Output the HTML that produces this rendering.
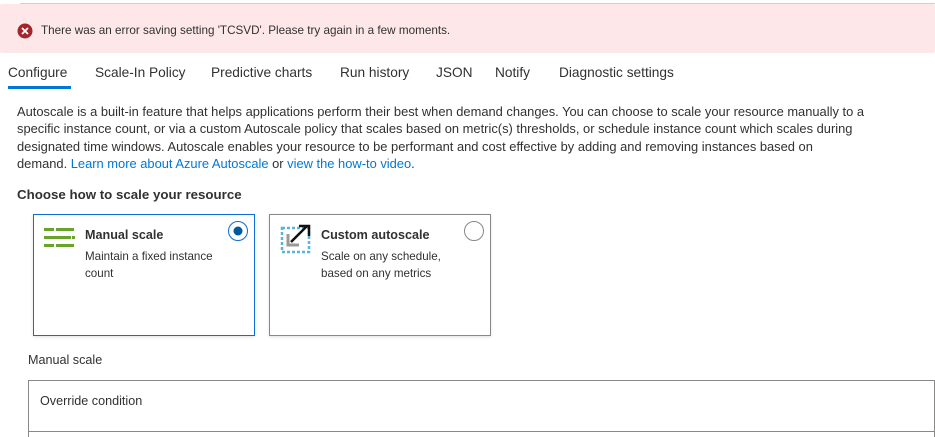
<!DOCTYPE html>
<html><head><meta charset="utf-8"><style>
*{margin:0;padding:0;box-sizing:border-box}
html,body{width:935px;height:437px;overflow:hidden}
body{background:#fff;font-family:"Liberation Sans",sans-serif;color:#323130;position:relative}
.abs{position:absolute}
.err{left:0;top:4px;width:935px;height:49px;background:#fde7e9;border-radius:2px}
.topline{left:20px;top:3px;width:915px;height:1px;background:#d0d0d0}
.tab{top:65px;font-size:13.7px;color:#323130;white-space:nowrap}
p{left:17px;top:103px;width:900px;white-space:nowrap;font-size:12.9px;line-height:17.3px;color:#323130}
a{color:#0078d4;text-decoration:none}
.card{top:214px;width:222px;height:122px;background:#fff;box-shadow:0 1px 3px rgba(0,0,0,.12)}
.t{font-size:12.6px;font-weight:bold;color:#323130}
.s{font-size:11.6px;line-height:17px;color:#323130}
</style></head><body>
<div class="abs topline"></div>
<div class="abs err"></div>
<svg class="abs" style="left:17px;top:23px" width="16" height="16" viewBox="0 0 16 16"><circle cx="8" cy="8" r="7.5" fill="#a4262c"/><path d="M5 5L11 11M11 5L5 11" stroke="#fff" stroke-width="1.8"/></svg>
<div class="abs" style="left:41px;top:24px;font-size:11.7px;color:#323130">There was an error saving setting 'TCSVD'. Please try again in a few moments.</div>
<div class="abs tab" style="left:8px">Configure</div>
<div class="abs" style="left:8px;top:86px;width:63px;height:3px;background:#0078d4"></div>
<div class="abs tab" style="left:95px">Scale-In Policy</div>
<div class="abs tab" style="left:211px">Predictive charts</div>
<div class="abs tab" style="left:340px">Run history</div>
<div class="abs tab" style="left:436px">JSON</div>
<div class="abs tab" style="left:495px">Notify</div>
<div class="abs tab" style="left:559px">Diagnostic settings</div>
<p class="abs">Autoscale is a built-in feature that helps applications perform their best when demand changes. You can choose to scale your resource manually to a<br>specific instance count, or via a custom Autoscale policy that scales based on metric(s) thresholds, or schedule instance count which scales during<br>designated time windows. Autoscale enables your resource to be performant and cost effective by adding and removing instances based on<br>demand. <a>Learn more about Azure Autoscale</a> or <a>view the how-to video</a>.</p>
<div class="abs" style="left:17px;top:187px;font-size:13.3px;font-weight:bold;color:#323130">Choose how to scale your resource</div>
<div class="abs card" style="left:33px;border:1px solid #0f6cd9"></div>
<svg class="abs" style="left:44px;top:228px" width="32" height="20"><g fill="#6aa329"><rect x="0" y="0" width="10" height="3"/><rect x="12" y="0" width="18" height="3"/><rect x="0" y="8" width="27" height="3"/><rect x="28" y="8" width="3" height="3"/><rect x="0" y="16" width="10" height="3"/><rect x="12" y="16" width="18" height="3"/></g></svg>
<div class="abs t" style="left:85px;top:228px">Manual scale</div>
<div class="abs s" style="left:85px;top:248px">Maintain a fixed instance<br>count</div>
<svg class="abs" style="left:227px;top:220px" width="22" height="22"><circle cx="11" cy="11" r="9.5" fill="#fff" stroke="#0f6cd9" stroke-width="1"/><circle cx="11" cy="11" r="4.5" fill="#005a9e"/></svg>
<div class="abs card" style="left:269px;border:1px solid #8a8886"></div>
<svg class="abs" style="left:280px;top:224px" width="34" height="30"><rect x="2" y="4" width="27" height="24" fill="none" stroke="#59b4d9" stroke-width="2.5" stroke-dasharray="3 2"/><path d="M8 10V21H19" fill="none" stroke="#999" stroke-width="3"/><path d="M11 18L27 2M19 2H29V12" fill="none" stroke="#111" stroke-width="2.5"/></svg>
<div class="abs t" style="left:321px;top:228px">Custom autoscale</div>
<div class="abs s" style="left:321px;top:248px">Scale on any schedule,<br>based on any metrics</div>
<svg class="abs" style="left:463px;top:220px" width="22" height="22"><circle cx="11" cy="11" r="9.5" fill="#fff" stroke="#8a8886" stroke-width="1"/></svg>
<div class="abs" style="left:28px;top:353px;font-size:12.6px">Manual scale</div>
<div class="abs" style="left:28px;top:380px;width:907px;height:70px;border:1px solid #8a8886"></div>
<div class="abs" style="left:28px;top:431px;width:907px;height:1px;background:#8a8886"></div>
<div class="abs" style="left:40px;top:394px;font-size:12.6px">Override condition</div>
</body></html>
